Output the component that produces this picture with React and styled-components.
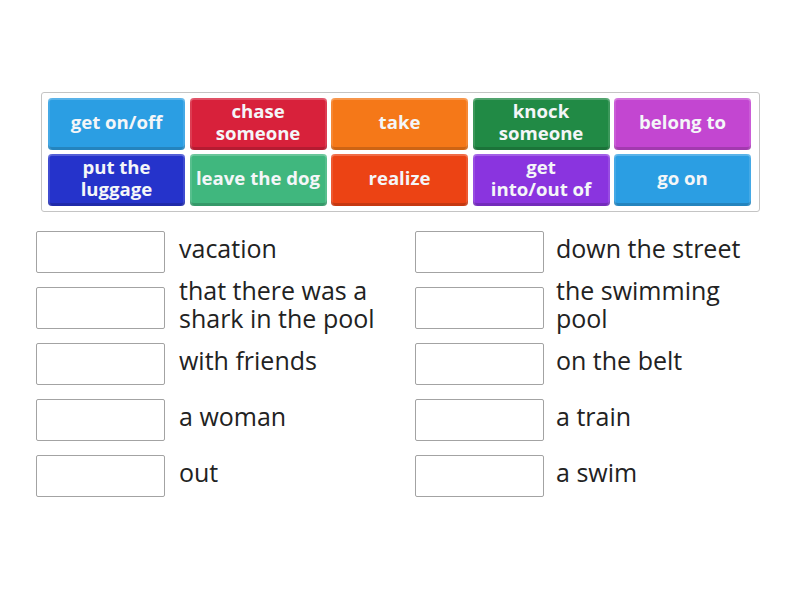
import React from "react";
import styled, { createGlobalStyle } from "styled-components";

const Global = createGlobalStyle`
  html, body { margin: 0; padding: 0; background: #fff; }
  body { font-family: "Open Sans", "Liberation Sans", sans-serif; }
`;

const Page = styled.div`
  width: 800px;
  height: 600px;
  padding-top: 92px;
  box-sizing: border-box;
`;

const TileBoard = styled.div`
  margin-left: 41px;
  width: 719px;
  box-sizing: border-box;
  border: 1px solid #c4c4c4;
  border-radius: 3px;
  padding: 5px 6px 5px 6px;
  display: grid;
  grid-template-columns: repeat(5, 137px);
  grid-auto-rows: 52px;
  column-gap: 4.5px;
  row-gap: 4px;
`;

const Tile = styled.div`
  background: ${(p) => p.$c};
  border-radius: 4px;
  display: flex;
  align-items: center;
  justify-content: center;
  text-align: center;
  color: #f4f6f8;
  font-weight: 700;
  font-size: 18.6px;
  line-height: 22px;
  box-shadow:
    inset 0 2px 0 rgba(255, 255, 255, 0.22),
    inset 2px 0 0 rgba(255, 255, 255, 0.12),
    inset -2px 0 0 rgba(255, 255, 255, 0.12),
    inset 0 -3px 0 rgba(0, 0, 0, 0.16);
  padding-bottom: 5px;
  box-sizing: border-box;
`;

const Answers = styled.div`
  margin-top: 19px;
  margin-left: 36px;
  display: grid;
  grid-template-columns: 379px 379px;
  grid-auto-rows: 42px;
  row-gap: 14px;
`;

const Item = styled.div`
  display: flex;
  align-items: center;
`;

const Slot = styled.div`
  width: 129px;
  height: 42px;
  box-sizing: border-box;
  border: 1px solid #a3a3a3;
  border-radius: 2px;
  flex: none;
`;

const Label = styled.div`
  margin-left: ${(p) => p.$gap}px;
  font-size: 25px;
  line-height: 28px;
  color: #222;
  margin-top: -8px;
  white-space: nowrap;
`;

const tiles = [
  ["get on/off", "#2b9ee3"],
  ["chase\nsomeone", "#d8213b"],
  ["take", "#f57818"],
  ["knock\nsomeone", "#218a45"],
  ["belong to", "#c346d1"],
  ["put the\nluggage", "#2533cb"],
  ["leave the dog", "#40b77e"],
  ["realize", "#ec4314"],
  ["get\ninto/out of", "#8a34df"],
  ["go on", "#2b9ee3"],
];

const left = [
  "vacation",
  "that there was a\nshark in the pool",
  "with friends",
  "a woman",
  "out",
];
const right = [
  "down the street",
  "the swimming\npool",
  "on the belt",
  "a train",
  "a swim",
];

function Lines({ text }) {
  const parts = text.split("\n");
  return parts.map((t, i) => (
    <React.Fragment key={i}>
      {t}
      {i < parts.length - 1 && <br />}
    </React.Fragment>
  ));
}

export default function App() {
  const rows = [];
  for (let i = 0; i < 5; i++) {
    rows.push(
      <Item key={"l" + i}>
        <Slot />
        <Label $gap={14}>
          <Lines text={left[i]} />
        </Label>
      </Item>
    );
    rows.push(
      <Item key={"r" + i}>
        <Slot />
        <Label $gap={12}>
          <Lines text={right[i]} />
        </Label>
      </Item>
    );
  }
  return (
    <Page>
      <Global />
      <TileBoard>
        {tiles.map(([t, c], i) => (
          <Tile key={i} $c={c}>
            <span>
              <Lines text={t} />
            </span>
          </Tile>
        ))}
      </TileBoard>
      <Answers>{rows}</Answers>
    </Page>
  );
}
